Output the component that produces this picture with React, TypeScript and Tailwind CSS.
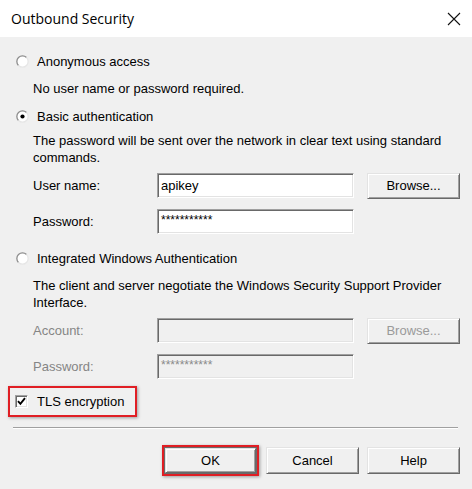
import type { ReactNode } from "react";

const sunken =
  "border border-t-[#a0a0a0] border-l-[#a0a0a0] border-r-white border-b-white shadow-[inset_1px_1px_0_#696969,inset_-1px_-1px_0_#e3e3e3]";
const raised =
  "border border-t-[#e3e3e3] border-l-[#e3e3e3] border-r-[#696969] border-b-[#696969] shadow-[inset_1px_1px_0_#ffffff,inset_-1px_-1px_0_#a0a0a0] bg-[#f0f0f0]";

function Radio({ checked }: { checked?: boolean }) {
  return (
    <svg width="13" height="13" viewBox="0 0 13 13" className="flex-none">
      <circle cx="6.5" cy="6.5" r="5.6" fill="#ffffff" />
      <path d="M2.5 10.5 A5.6 5.6 0 0 1 10.5 2.5" stroke="#8d8d8d" strokeWidth="1.3" fill="none" />
      <path d="M10.5 2.5 A5.6 5.6 0 0 1 2.5 10.5" stroke="#e6e6e6" strokeWidth="1.3" fill="none" />
      {checked && <circle cx="6.5" cy="6.5" r="2.1" fill="#000000" />}
    </svg>
  );
}

function Checkbox() {
  return (
    <div className={`flex h-[13px] w-[13px] flex-none items-center justify-center bg-white ${sunken}`}>
      <svg width="9" height="9" viewBox="0 0 9 9">
        <path d="M1 4.2 L3.4 6.8 L8 1.2" stroke="#000" strokeWidth="1.9" fill="none" />
      </svg>
    </div>
  );
}

function RadioRow({ checked, children }: { checked?: boolean; children: ReactNode }) {
  return (
    <div className="ml-[16px] flex h-[17px] items-center gap-[8px]">
      <Radio checked={checked} />
      <span>{children}</span>
    </div>
  );
}

function Field({
  label,
  value,
  disabled,
  masked,
  browse,
  className = "",
}: {
  label: string;
  value?: string;
  disabled?: boolean;
  masked?: boolean;
  browse?: boolean;
  className?: string;
}) {
  return (
    <div className={`ml-[33px] flex h-[25px] items-center ${className}`}>
      <span className={`w-[124px] ${disabled ? "text-[#858585]" : ""}`}>{label}</span>
      <div
        className={`flex h-[25px] w-[197px] items-center px-[3px] ${sunken} ${
          disabled ? "bg-[#f0f0f0]" : "bg-white"
        }`}
      >
        <span
          className={`${masked ? "-mt-[3px] text-[12px] leading-[12px]" : ""} ${disabled ? "text-[#8a8a8a]" : ""}`}
        >
          {value}
        </span>
      </div>
      {browse && (
        <div
          className={`ml-[13px] flex h-[26px] w-[93px] items-center justify-center ${raised} ${
            disabled ? "text-[#9a9a9a]" : ""
          }`}
        >
          Browse...
        </div>
      )}
    </div>
  );
}

export default function App() {
  return (
    <div
      className="h-[489px] w-[472px] overflow-hidden bg-[#f0f0f0] text-[13px] leading-[17px] text-black"
      style={{ fontFamily: '"Liberation Sans", Arial, sans-serif' }}
    >
      <div className="flex h-[37px] items-center justify-between bg-white pl-[11px] pr-[11px]">
        <span className="text-[14px]" style={{ fontFamily: '"Open Sans", "Noto Sans", sans-serif' }}>
          Outbound Security
        </span>
        <svg width="14" height="14" viewBox="0 0 14 14">
          <path d="M1 1 L13 13 M13 1 L1 13" stroke="#111" strokeWidth="1.1" />
        </svg>
      </div>

      <div className="pt-[16px]">
        <RadioRow>Anonymous access</RadioRow>
        <div className="ml-[33px] mt-[10px]">No user name or password required.</div>

        <div className="mt-[11px]">
          <RadioRow checked>Basic authentication</RadioRow>
        </div>
        <div className="ml-[33px] mt-[7px] w-[430px]">
          The password will be sent over the network in clear text using standard commands.
        </div>
        <Field className="mt-[7px]" label="User name:" value="apikey" browse />
        <Field className="mt-[11px]" label="Password:" value="***********" masked />

        <div className="mt-[16px]">
          <RadioRow>Integrated Windows Authentication</RadioRow>
        </div>
        <div className="ml-[33px] mt-[10px] w-[430px]">
          The client and server negotiate the Windows Security Support Provider Interface.
        </div>
        <Field className="mt-[7px]" label="Account:" disabled browse />
        <Field className="mt-[11px]" label="Password:" value="***********" masked disabled />

        <div className="ml-[8px] mt-[7px] flex h-[31px] w-[129px] items-center gap-[9px] border-2 border-[#e01e24] pl-[5px] shadow-[1px_1px_3px_rgba(0,0,0,0.35)]">
          <Checkbox />
          <span>TLS encryption</span>
        </div>

        <div className="ml-[13px] mt-[10px] h-[2px] w-[445px] border-t border-t-[#a0a0a0] border-b border-b-white" />

        <div className="mt-[16px] flex items-center justify-end pr-[12px]">
          <div className="border-2 border-[#e01e24] shadow-[1px_1px_3px_rgba(0,0,0,0.35)]">
            <div className="border border-[#6a6a6a]">
              <div className={`flex h-[25px] w-[91px] items-center justify-center ${raised}`}>OK</div>
            </div>
          </div>
          <div className={`ml-[7px] flex h-[27px] w-[93px] items-center justify-center ${raised}`}>Cancel</div>
          <div className={`ml-[8px] flex h-[27px] w-[93px] items-center justify-center ${raised}`}>Help</div>
        </div>
      </div>
    </div>
  );
}
